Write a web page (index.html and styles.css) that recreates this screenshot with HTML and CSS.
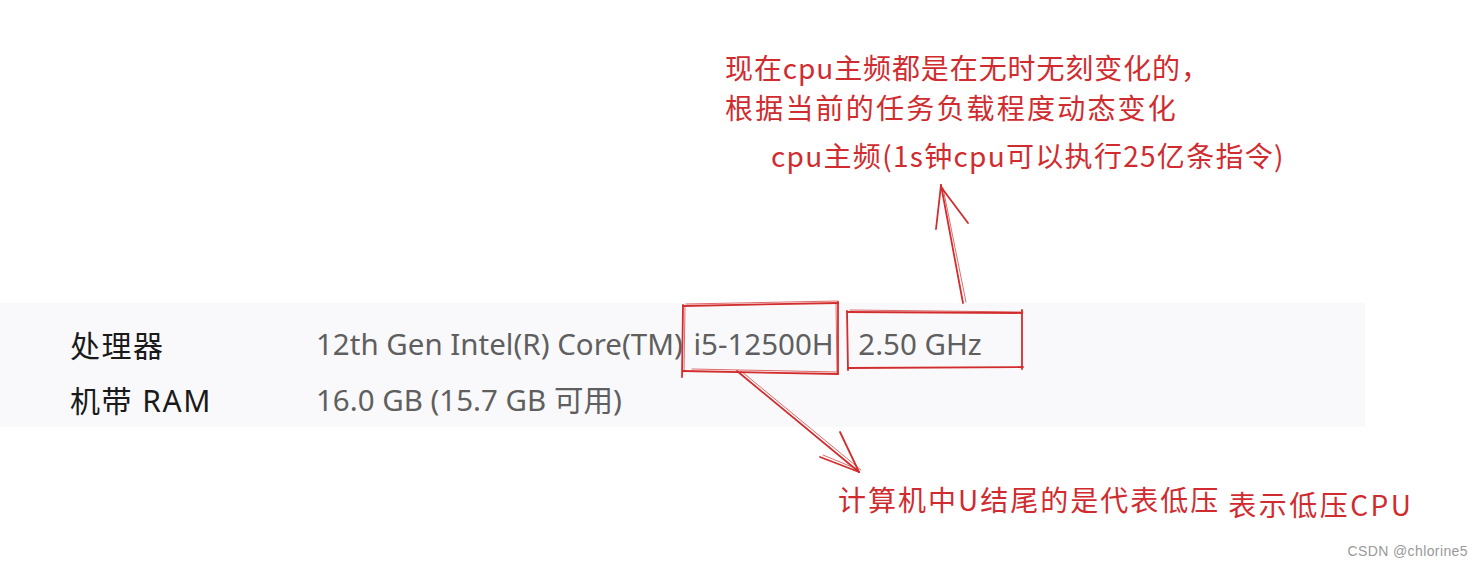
FILE: index.html
```html
<!DOCTYPE html>
<html lang="zh-CN">
<head>
<meta charset="utf-8">
<title>处理器</title>
<link rel="stylesheet" href="styles.css">
</head>
<body>
<div class="canvas">
  <div class="note note-top">
    <div class="line-a">现在cpu主频都是在无时无刻变化的，</div>
    <div class="line-b">根据当前的任务负载程度动态变化</div>
  </div>
  <div class="note note-freq">cpu主频(1s钟cpu可以执行25亿条指令)</div>

  <section class="specs">
    <div class="row">
      <div class="label">处理器</div>
      <div class="value"><span>12th Gen Intel(R) Core(TM)</span> <span class="model">i5-12500H</span> <span class="freq">2.50 GHz</span></div>
    </div>
    <div class="row">
      <div class="label">机带 RAM</div>
      <div class="value">16.0 GB (15.7 GB 可用)</div>
    </div>
  </section>

  <div class="note-bottom">
    <span class="note note-u">计算机中U结尾的是代表低压</span>
    <span class="note note-low">表示低压CPU</span>
  </div>

  <svg class="ink" width="1483" height="567" viewBox="0 0 1483 567" fill="none" stroke="#d22d2d" stroke-linecap="round">
    <g stroke-width="1.8">
      <path d="M683 306 L838 303"/>
      <path d="M686 304 L838 301" stroke-width="1" opacity="0.7"/>
      <path d="M838 302 L838 374"/>
      <path d="M836 303 L837 372" stroke-width="1" opacity="0.7"/>
      <path d="M683 371 L838 374"/>
      <path d="M692 369 L838 372" stroke-width="1" opacity="0.7"/>
      <path d="M683 305 L682 377"/>
      <path d="M685 306 L684 372" stroke-width="1" opacity="0.7"/>

      <path d="M847 312 L1022 313"/>
      <path d="M850 310 L1023 312" stroke-width="1" opacity="0.7"/>
      <path d="M1022 310 L1022 369"/>
      <path d="M848 368 L1023 367"/>
      <path d="M847 311 L848 370"/>

      <path d="M963 303 L941 185"/>
      <path d="M966 302 L943 188" stroke-width="1" opacity="0.7"/>
      <path d="M941 185 L936 229"/>
      <path d="M941 187 L968 223"/>

      <path d="M737 371 L859 472"/>
      <path d="M741 371 L861 470" stroke-width="1" opacity="0.7"/>
      <path d="M840 432 L859 472"/>
      <path d="M820 457 L859 472"/>
      <path d="M823 455 L857 469" stroke-width="1" opacity="0.7"/>
    </g>
  </svg>

  <div class="watermark">CSDN @chlorine5</div>
</div>
</body>
</html>
```
FILE: styles.css
```css
html, body {
  margin: 0;
  padding: 0;
  background: #ffffff;
}

.canvas {
  position: relative;
  width: 1483px;
  height: 567px;
  overflow: hidden;
}

.note {
  color: #d02c2f;
  font-family: "Noto Sans CJK SC", "Noto Sans", sans-serif;
  font-size: 28px;
  letter-spacing: 1.5px;
}

.note-top {
  padding-top: 47px;
  margin-left: 725px;
  line-height: 40px;
}

.note-top .line-a {
  letter-spacing: 0.9px;
}

.note-top .line-b {
  letter-spacing: 2.2px;
}

.note-freq {
  margin-left: 771px;
  margin-top: 8px;
  line-height: 40px;
  letter-spacing: 1.3px;
}

.specs {
  margin-top: 128px;
  width: 1365px;
  height: 124px;
  box-sizing: border-box;
  padding-top: 13px;
  background: #f9f9fb;
}

.row {
  display: flex;
  align-items: center;
  height: 55px;
}

.label {
  width: 246px;
  padding-left: 70px;
  color: #1a1a1a;
  font-family: "Noto Sans", "Noto Sans CJK SC", sans-serif;
  font-size: 30px;
  letter-spacing: 1.5px;
}

.value {
  color: #5f5f5f;
  font-family: "Noto Sans", "Noto Sans CJK SC", sans-serif;
  font-size: 29.5px;
  letter-spacing: 0;
  white-space: nowrap;
}

.value .model {
  margin-left: 3px;
}

.value .freq {
  margin-left: 17px;
}

.note-bottom {
  display: flex;
  align-items: flex-end;
  gap: 8px;
  margin-left: 838px;
  margin-top: 52px;
  line-height: 40px;
}

.note-u {
  letter-spacing: 2px;
}

.note-low {
  position: relative;
  top: 5px;
  letter-spacing: 2.5px;
}

.ink {
  position: absolute;
  left: 0;
  top: 0;
  pointer-events: none;
}

.watermark {
  position: absolute;
  right: 15px;
  bottom: 8px;
  color: #999999;
  font-family: "Liberation Sans", sans-serif;
  font-size: 14px;
  letter-spacing: 0.4px;
}
```
